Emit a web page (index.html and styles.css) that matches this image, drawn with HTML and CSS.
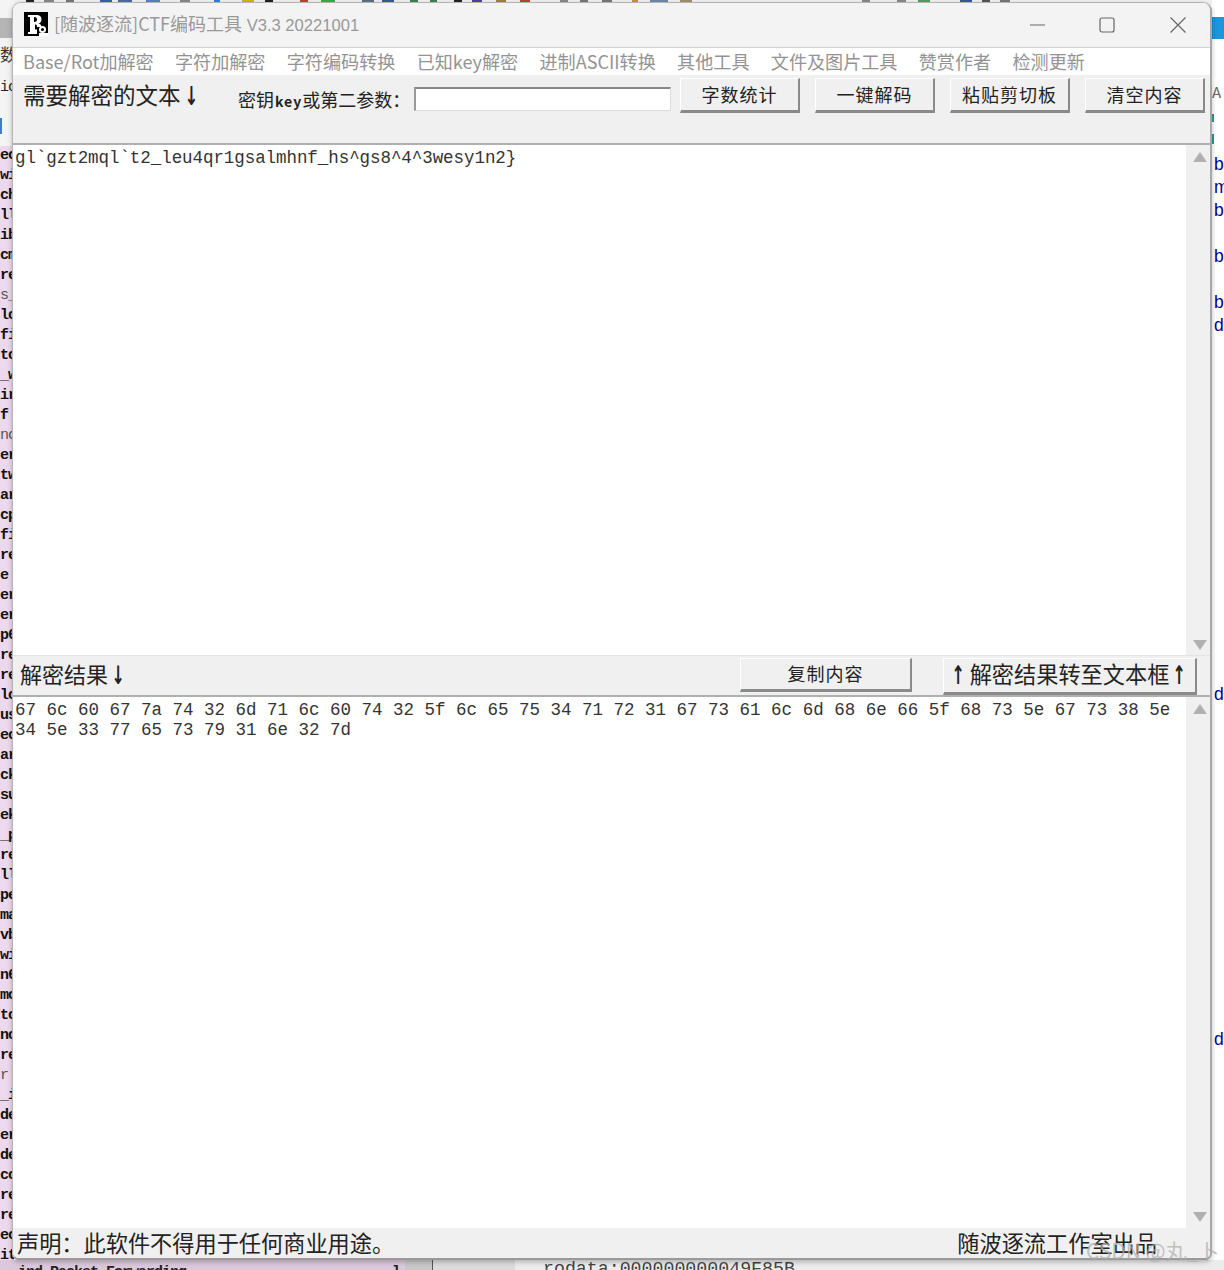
FILE: index.html
```html
<!DOCTYPE html>
<html lang="zh-CN">
<head>
<meta charset="utf-8">
<title>CTF编码工具</title>
<link rel="stylesheet" href="styles.css">
</head>
<body>
<div class="desktop">
  <div class="bg-top"></div>
  <div class="bg-left">
    <div class="bg-left-head">
      <div class="lh-gray"></div>
      <div class="lh-txt">数</div>
      <div class="lh-mono">io</div>
      <div class="lh-mark"></div>
    </div>
    <div class="code">
      <div>ec</div><div>wi</div><div>ch</div><div>ll</div><div>ib</div><div>cm</div><div>re</div><div class="thin">s_</div><div>lo</div><div>fi</div><div>to</div><div>_w</div><div>ir</div><div>f</div><div class="thin">no</div><div>er</div><div>tw</div><div>ar</div><div>cp</div><div>fi</div><div>re</div><div>e</div><div>er</div><div>er</div><div>p6</div><div>re</div><div>re</div><div>lo</div><div>us</div><div>ec</div><div>ar</div><div>ck</div><div>su</div><div>ek</div><div>_p</div><div>re</div><div>ll</div><div>pe</div><div>ma</div><div>vb</div><div>wi</div><div>n6</div><div>mo</div><div>to</div><div>no</div><div>re</div><div class="thin">r</div><div>_i</div><div>de</div><div>er</div><div>de</div><div>co</div><div>re</div><div>re</div><div>ec</div><div>it</div>
    </div>
  </div>
  <div class="bg-right">
    <div class="r-blue"></div>
    <div class="r-a">A</div>
    <div class="r-teal"></div>
    <div class="r-col">
      <div>b</div><div>m</div><div>b</div><div class="skip1">b</div><div class="skip1">b</div><div>d</div><div class="skip15">d</div><div class="skip14">d</div>
    </div>
  </div>
  <div class="bg-bottom">
    <div class="bb-code">ind Packet Forwarding<span class="bb-end">l</span></div>
    <div class="bb-gutter"></div>
    <div class="bb-mid"></div>
    <div class="bb-rodata">rodata:000000000049F85B</div>
  </div>

  <main class="window">
    <header class="titlebar">
      <svg class="logo" viewBox="0 0 24 24" width="24" height="24" aria-hidden="true">
        <rect width="24" height="24" fill="#000"/>
        <path d="M4 3h8c4 0 5.500 1.500 5.500 4.500 0 2-1 3.500-3 4 2 .5 3 1.500 3 3.500H13c0-2-.5-2.500-2-2.500v5c1 0 1.500-.1 2-.3V22H4V20h2V5H4z M10 5v5c2.500 0 3-1 3-2.500S12.500 5 10 5z" fill="#fff" fill-rule="evenodd"/>
        <circle cx="18.500" cy="17.500" r="3.500" fill="#fff"/>
        <circle cx="18.500" cy="17.500" r="1.500" fill="#000"/>
        <rect x="15" y="21" width="9" height="3" fill="#fff"/>
      </svg>
      <span class="title">[随波逐流]CTF编码工具<span class="ver"> V3.3 20221001</span></span>
      <div class="controls">
        <svg class="ctl ctl-min" viewBox="0 0 16 16" width="16" height="16" aria-hidden="true"><path d="M0 8h15" /></svg>
        <svg class="ctl" viewBox="0 0 16 16" width="16" height="16" aria-hidden="true"><rect x="1" y="1" width="14" height="14" rx="2"/></svg>
        <svg class="ctl" viewBox="0 0 16 16" width="16" height="16" aria-hidden="true"><path d="M.5.500l15 15M15.500.500l-15 15"/></svg>
      </div>
    </header>
    <nav class="menubar">
      <span>Base/Rot加解密</span><span>字符加解密</span><span>字符编码转换</span><span>已知key解密</span><span>进制ASCII转换</span><span>其他工具</span><span>文件及图片工具</span><span>赞赏作者</span><span>检测更新</span>
    </nav>
    <section class="toolbar">
      <div class="label-big">需要解密的文本<span class="arrow">↓</span></div>
      <label class="key-label">密钥<span class="key-small">key</span>或第二参数&#xFF1A;</label>
      <input class="key-input" type="text">
      <div class="tool-buttons">
        <button class="btn">字数统计</button>
        <button class="btn">一键解码</button>
        <button class="btn">粘贴剪切板</button>
        <button class="btn">清空内容</button>
      </div>
    </section>
    <section class="editor">
      <div class="pane pane-source">gl`gzt2mql`t2_leu4qr1gsalmhnf_hs^gs8^4^3wesy1n2}</div>
      <div class="scroll"><i class="tri up"></i><i class="tri down"></i></div>
    </section>
    <section class="resultbar">
      <div class="label-res">解密结果<span class="arrow">↓</span></div>
      <button class="btn btn-copy">复制内容</button>
      <button class="btn btn-move"><span class="arrow">↑</span>解密结果转至文本框<span class="arrow">↑</span></button>
    </section>
    <section class="editor editor-2">
      <div class="pane">67 6c 60 67 7a 74 32 6d 71 6c 60 74 32 5f 6c 65 75 34 71 72 31 67 73 61 6c 6d 68 6e 66 5f 68 73 5e 67 73 38 5e<br>34 5e 33 77 65 73 79 31 6e 32 7d</div>
      <div class="scroll"><i class="tri up"></i><i class="tri down"></i></div>
    </section>
    <footer class="statusbar">
      <span>声明&#xFF1A;此软件不得用于任何商业用途。</span>
      <span>随波逐流工作室出品</span>
    </footer>
  </main>
  <div class="watermark">CSDN @丸_卜</div>
</div>
</body>
</html>
```
FILE: styles.css
```css
* { box-sizing: border-box; }
html, body { margin: 0; padding: 0; }
body { width: 1224px; height: 1270px; overflow: hidden; background: #fff; font-family: "Noto Sans CJK SC", "Noto Sans", sans-serif; }
.desktop { position: relative; width: 1224px; height: 1270px; overflow: hidden; background: #fff; }

.bg-top { position: absolute; left: 0; top: 0; width: 1224px; height: 5px;
  background: linear-gradient(90deg,
    #f0f0f0 26px, #222 26px 34px, #f0f0f0 34px 44px, #888 44px 54px, #f0f0f0 54px 66px, #777 66px 74px, #f0f0f0 74px 100px,
    #3a5fb0 100px 112px, #f0f0f0 112px 118px, #4a6aa8 118px 132px, #f0f0f0 132px 146px, #5a80c0 146px 160px, #f0f0f0 160px 180px,
    #888 180px 190px, #f0f0f0 190px 214px, #2a80d8 214px 220px, #f0f0f0 220px 242px, #c8b818 242px 254px, #f0f0f0 254px 265px,
    #222 265px 273px, #f0f0f0 273px 300px, #c84030 300px 308px, #f0f0f0 308px 321px, #30b040 321px 335px, #f0f0f0 335px 362px,
    #607080 362px 374px, #f0f0f0 374px 382px, #3858a0 382px 394px, #f0f0f0 394px 410px, #408050 410px 418px, #f0f0f0 418px 430px,
    #408050 430px 437px, #f0f0f0 437px 454px, #222 454px 462px, #f0f0f0 462px 472px, #5040b0 472px 482px, #f0f0f0 482px 496px,
    #a08040 496px 506px, #f0f0f0 506px 520px, #c04030 520px 530px, #f0f0f0 530px 560px, #888 560px 568px, #f0f0f0 568px 580px,
    #777 580px 588px, #f0f0f0 588px 602px, #777 602px 612px, #f0f0f0 612px 632px, #c89040 632px 638px, #f0f0f0 638px 650px,
    #7088a8 650px 668px, #f0f0f0 668px 680px, #a09070 680px 692px, #f0f0f0 692px 862px, #888 862px 870px, #f0f0f0 870px 897px,
    #888 897px 906px, #f0f0f0 906px 918px, #50a060 918px 930px, #f0f0f0 930px 960px, #3858a0 960px 972px, #f0f0f0 972px 982px,
    #555 982px 990px, #f0f0f0 990px 1000px, #777 1000px 1010px, #f0f0f0 1010px); }

.bg-left { position: absolute; left: 0; top: 0; width: 14px; height: 1270px; background: #fff; overflow: hidden; }
.bg-left-head { height: 146px; background: #f4f4f4; position: relative; }
.lh-gray { position: absolute; left: 0; top: 18px; width: 14px; height: 20px; background: #b5b5b5; }
.lh-txt { position: absolute; left: 0; top: 42px; font-size: 17px; line-height: 24px; color: #333; }
.lh-mono { position: absolute; left: 0; top: 78px; font: 15px/20px "Liberation Mono", monospace; letter-spacing: -1px; color: #222; }
.lh-mark { position: absolute; left: 0; top: 118px; width: 2px; height: 16px; background: #3a80d0; }
.code { background: #edd9ed; font: bold 15px/20px "Liberation Mono", monospace; letter-spacing: -1px; color: #111; height: 1124px; }
.code div { height: 20px; white-space: nowrap; }
.code .thin { font-weight: normal; color: #555; }

.bg-right { position: absolute; right: 0; top: 0; width: 12px; height: 1270px; background: #fff; overflow: hidden; }
.r-blue { position: absolute; left: 0; top: 17px; width: 12px; height: 22px; background: #1a96dc; }
.r-a { position: absolute; left: 0; top: 82px; font-size: 15px; line-height: 20px; color: #666; }
.r-teal { position: absolute; left: 0; top: 114px; width: 2px; height: 30px; background: linear-gradient(#2a9a8a 0 8px, #fff 8px 20px, #2a9a8a 20px); }
.r-col { position: absolute; left: 2px; top: 153px; font-size: 17.500px; line-height: 23px; color: #00008b; font-family: "Liberation Sans", sans-serif; }
.r-col div { height: 23px; }
.r-col .skip1 { margin-top: 23px; }
.r-col .skip15 { margin-top: 346px; }
.r-col .skip14 { margin-top: 322px; }

.bg-bottom { position: absolute; left: 0; bottom: 0; width: 1224px; height: 10px; background: #ececec; overflow: hidden; display: flex; }
.bb-code { flex: none; width: 405px; background: #dcc8dc; font: bold 15px/20px "Liberation Mono", monospace; letter-spacing: -1px; color: #222; padding: 3px 0 0 18px; white-space: nowrap; position: relative; }
.bb-end { position: absolute; left: 392px; }
.bb-gutter { flex: none; width: 28px; background: #c8c8c8; border-right: 1px solid #555; }
.bb-mid { flex: none; width: 82px; background: #dcdcdc; }
.bb-rodata { padding-left: 28px; font: 18.250px/20px "Liberation Mono", monospace; color: #444; white-space: nowrap; margin-top: -1px; }

.window { position: absolute; left: 12px; top: 2px; width: 1200px; height: 1258px; display: flex; flex-direction: column; background: #f0f0f0; border: 1px solid #b4b4b4; border-bottom: 2px solid #9a9a9a; border-right: 2px solid #a8a8a8; border-radius: 9px 9px 7px 7px; overflow: hidden; box-shadow: 0 2px 5px rgba(0,0,0,.25); }

.titlebar { height: 45px; flex: none; display: flex; align-items: center; padding: 0 0 2px 11px; background: #f3f3f3; border-bottom: 1px solid #d2d2d2; }
.logo { flex: none; margin-right: 6px; }
.title { font-size: 18px; color: #999; line-height: 24px; white-space: nowrap; }
.ver { font-family: "Liberation Sans", sans-serif; font-size: 16.600px; white-space: pre; }
.controls { margin-left: auto; display: flex; gap: 55px; padding: 2px 24px 0 0; align-items: center; }
.ctl { fill: none; stroke: #666; stroke-width: 1.200; display: block; }
.ctl-min { margin-right: -2px; }

.menubar { height: 27px; flex: none; display: flex; gap: 21.300px; align-items: center; padding: 0 0 2px 10px; background: #fff; font-size: 18.100px; color: #939393; white-space: nowrap; }

.toolbar { height: 70px; flex: none; display: flex; align-items: flex-start; background: #f0f0f0; padding-left: 10px; border-bottom: 2px solid #b0b0b0; }
.label-big { width: 215px; font-size: 22.500px; line-height: 30px; padding-top: 4px; color: #222; white-space: nowrap; }
.arrow { display: inline-block; margin: 0 2px 0 1px; font-family: "DejaVu Sans", sans-serif; font-weight: bold; transform: scale(.72, 1.15); }
.key-label { width: 176px; font-size: 18px; line-height: 24px; margin-top: 12px; color: #222; white-space: nowrap; }
.key-small { font-size: 14px; letter-spacing: 1px; font-weight: bold; margin-left: 1px; }
.key-input { width: 257px; height: 24px; margin-top: 12px; background: #fff; border: 1px solid #ddd; border-top: 2px solid #888; border-left: 2px solid #999; padding: 0; }
.tool-buttons { display: flex; gap: 15px; margin-left: 9px; margin-top: 3px; }

.btn { width: 120px; height: 35px; padding: 0 0 2px; background: #f0f0f0; font-family: "Noto Sans CJK SC", sans-serif; font-size: 18px; letter-spacing: 1px; color: #222; border: 1px solid #fff; border-right: 2px solid #8a8a8a; border-bottom: 3px solid #8a8a8a; white-space: nowrap; }

.editor { flex: none; height: 510px; display: flex; background: #f0f0f0; }
.editor-2 { height: 531px; }
.pane { width: 1173px; background: #fff; padding: 3px 0 0 2px; font: 17.500px/20px "Liberation Mono", monospace; color: #333; white-space: nowrap; }
.pane-source { letter-spacing: -.06px; }
.scroll { flex: 1; display: flex; flex-direction: column; justify-content: space-between; align-items: center; padding: 7px 0 5px 4px; }
.editor-2 .scroll { padding-bottom: 6px; }
.tri { display: block; width: 0; height: 0; border-left: 7px solid transparent; border-right: 7px solid transparent; }
.tri.up { border-bottom: 10px solid #b0b0b0; }
.tri.down { border-top: 10px solid #b0b0b0; }

.resultbar { height: 42px; flex: none; display: flex; align-items: flex-start; background: #f0f0f0; padding: 2px 0 0 7px; border-bottom: 2px solid #b0b0b0; border-top: 1px solid #e4e4e4; }
.label-res { width: 720px; font-size: 22px; line-height: 28px; padding-top: 1px; color: #222; white-space: nowrap; }
.btn-copy { width: 172px; height: 34px; }
.btn-move { width: 254px; height: 37px; margin-left: 31px; font-size: 22.200px; line-height: 24px; letter-spacing: 0; padding-bottom: 3px; }

.statusbar { flex: 1; display: flex; justify-content: space-between; align-items: center; padding: 0 53px 2px 4px; font-size: 22.200px; line-height: 24px; color: #222; background: #f0f0f0; white-space: nowrap; }

.watermark { position: absolute; left: 1086px; top: 1238px; font-size: 21px; line-height: 24px; color: rgba(175,175,175,.75); white-space: nowrap; }
```
